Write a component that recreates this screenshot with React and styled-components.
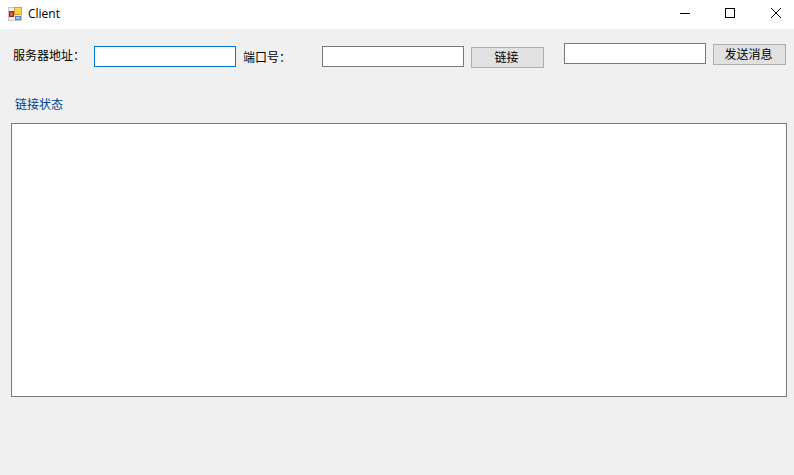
import React from 'react'
import styled, { createGlobalStyle } from 'styled-components'

const cjk = '"Noto Sans CJK SC", "Liberation Sans", sans-serif'

const GlobalStyle = createGlobalStyle`
	html, body {
		margin: 0;
		padding: 0;
		background: #f0f0f0;
	}
	* {
		box-sizing: border-box;
	}
`

const Window = styled.div`
	width: 794px;
	height: 475px;
	background: #f0f0f0;
	display: flex;
	flex-direction: column;
	overflow: hidden;
	font-family: ${cjk};
	font-size: 12px;
	color: #000;
`

const TitleBar = styled.div`
	height: 29px;
	background: #fff;
	display: flex;
	align-items: center;
	flex-shrink: 0;
`

const AppIcon = styled.svg`
	width: 14px;
	height: 14px;
	margin-left: 8px;
	margin-top: -2px;
`

const Title = styled.span`
	margin-left: 6px;
	margin-top: -2px;
	font-family: 'Open Sans', 'Liberation Sans', sans-serif;
	font-size: 12px;
	color: #000;
`

const WindowButtons = styled.div`
	margin-left: auto;
	margin-right: -5px;
	display: flex;
	height: 29px;
`

const WindowButton = styled.div`
	width: 46px;
	height: 29px;
	display: flex;
	align-items: center;
	justify-content: center;
	svg {
		width: 10px;
		height: 10px;
		margin-top: -3px;
		overflow: visible;
	}
`

const Toolbar = styled.div`
	display: flex;
	align-items: flex-start;
	padding: 14px 0 0 13px;
	height: 53px;
	flex-shrink: 0;
`

const FieldLabel = styled.label`
	width: ${(props) => props.$width}px;
	margin-top: ${(props) => props.$top}px;
	line-height: 18px;
	white-space: nowrap;
`

const TextBox = styled.input`
	width: 142px;
	height: 21px;
	margin-top: ${(props) => props.$top}px;
	margin-right: 7px;
	padding: 0 2px;
	background: #fff;
	border: 1px solid ${(props) => (props.$focused ? '#0078d7' : '#7a7a7a')};
	outline: none;
	border-radius: 0;
`

const ActionButton = styled.button`
	width: 73px;
	height: 21px;
	margin-top: ${(props) => props.$top}px;
	margin-right: ${(props) => props.$right}px;
	padding: 0 2px 2px 0;
	background: #e1e1e1;
	border: 1px solid #adadad;
	border-radius: 0;
	font-family: ${cjk};
	font-size: 12px;
	line-height: 17px;
	color: #000;
`

const StatusLabel = styled.div`
	margin: 13px 0 0 15px;
	height: 18px;
	line-height: 18px;
	color: #003c8f;
	flex-shrink: 0;
`

const LogBox = styled.div`
	width: 776px;
	height: 274px;
	margin: 10px 0 0 11px;
	background: #fff;
	border: 1px solid #7a7a7a;
	flex-shrink: 0;
`

const App = () => {
	return (
		<Window>
			<GlobalStyle />
			<TitleBar>
				<AppIcon viewBox="0 0 14 14" shapeRendering="crispEdges">
					<rect x="0" y="0" width="14" height="14" fill="#c8c8c8" />
					<rect x="1" y="1" width="12" height="12" fill="#efefef" />
					<rect x="6" y="0" width="8" height="8" fill="#d9a520" />
					<rect x="7" y="1" width="6" height="6" fill="#fbd34e" />
					<rect x="1" y="4" width="5" height="6" fill="#a81f1a" />
					<rect x="2" y="5" width="3" height="4" fill="#e0524a" />
					<rect x="7" y="9" width="6" height="4" fill="#4f86d8" />
					<rect x="8" y="10" width="4" height="2" fill="#a8c8f4" />
				</AppIcon>
				<Title>Client</Title>
				<WindowButtons>
					<WindowButton>
						<svg viewBox="-1 0 10 10">
							<path d="M0 5.5H10" stroke="#000" strokeWidth="1" fill="none" />
						</svg>
					</WindowButton>
					<WindowButton>
						<svg viewBox="0 0 10 10">
							<rect x="0.5" y="0.5" width="9" height="9" stroke="#000" strokeWidth="1" fill="none" />
						</svg>
					</WindowButton>
					<WindowButton>
						<svg viewBox="0 0 10 10">
							<path d="M0 0L10 10M10 0L0 10" stroke="#000" strokeWidth="1" fill="none" />
						</svg>
					</WindowButton>
				</WindowButtons>
			</TitleBar>
			<Toolbar>
				<FieldLabel $width={81} $top={3}>服务器地址：</FieldLabel>
				<TextBox $top={3} $focused />
				<FieldLabel $width={79} $top={5}>端口号：</FieldLabel>
				<TextBox $top={3} />
				<ActionButton $top={4} $right={20}>链接</ActionButton>
				<TextBox $top={0} />
				<ActionButton $top={1} $right={0}>发送消息</ActionButton>
			</Toolbar>
			<StatusLabel>链接状态</StatusLabel>
			<LogBox />
		</Window>
	)
}

export default App
